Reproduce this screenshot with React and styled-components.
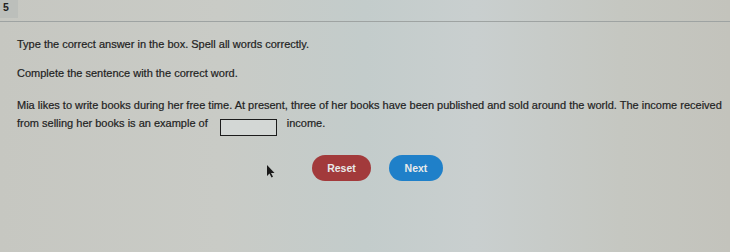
import React from "react";
import styled, { createGlobalStyle } from "styled-components";

const Global = createGlobalStyle`
  html, body { margin: 0; padding: 0; }
  body {
    width: 730px; height: 252px; overflow: hidden;
    background: linear-gradient(90deg, #c6c7c1 0%, #c9cbc6 30%, #c3cccb 50%, #c9cfcf 65%, #c5c7c1 85%, #c3c3bc 100%);
    font-family: "Liberation Sans", Arial, sans-serif;
    color: #222;
  }
`;

const Page = styled.div`
  position: relative;
  width: 730px;
  height: 252px;
`;

const Header = styled.div`
  display: flex;
  height: 21px;
  border-bottom: 1px solid #9ea3a2;
`;

const Number = styled.div`
  width: 18px;
  height: 18px;
  background: #bcbfbb;
  font-size: 10.5px;
  font-weight: bold;
  padding: 1px 0 0 3px;
  box-sizing: border-box;
`;

const Body = styled.div`
  padding: 15px 0 0 17px;
  font-size: 11px;
  -webkit-text-stroke: 0.2px #222;
`;

const Para = styled.p`
  margin: 0 0 ${(p) => p.$gap || 18}px 0;
  line-height: ${(p) => p.$lh || 14}px;
`;

const Blank = styled.span`
  display: inline-block;
  box-sizing: border-box;
  width: 57px;
  height: 17px;
  border: 1.5px solid #1c1c1c;
  vertical-align: -5px;
  margin: -4px 10px -4px 12px;
  background: #d3d7d5;
`;

const Buttons = styled.div`
  display: flex;
  gap: 18px;
  padding-left: 312px;
  margin-top: 23px;
`;

const Button = styled.div`
  height: 26px;
  width: ${(p) => p.$w}px;
  border-radius: 13px;
  background: ${(p) => p.$bg};
  color: #e8eaea;
  font-weight: bold;
  font-size: 10.5px;
  display: flex;
  align-items: center;
  justify-content: center;
`;

const Cursor = styled.svg`
  position: absolute;
  left: 266px;
  top: 164px;
`;

export default function App() {
  return (
    <>
      <Global />
      <Page>
        <Header>
          <Number>5</Number>
        </Header>
        <Body>
          <Para $gap={15}>Type the correct answer in the box. Spell all words correctly.</Para>
          <Para $gap={16}>Complete the sentence with the correct word.</Para>
          <Para $lh={18} $gap={0}>
            Mia likes to write books during her free time. At present, three of her books have been published and sold around the world. The income received
            <br />
            from selling her books is an example of<Blank />income.
          </Para>
        </Body>
        <Buttons>
          <Button $w={59} $bg="#a23a3b">Reset</Button>
          <Button $w={54} $bg="#1f80c9">Next</Button>
        </Buttons>
        <Cursor width="10" height="14" viewBox="0 0 10 14">
          <path d="M1 1 L1 12 L3.5 9.5 L5.5 13.5 L7 12.8 L5 9 L8.5 9 Z" fill="#1a1a1a" />
        </Cursor>
      </Page>
    </>
  );
}
